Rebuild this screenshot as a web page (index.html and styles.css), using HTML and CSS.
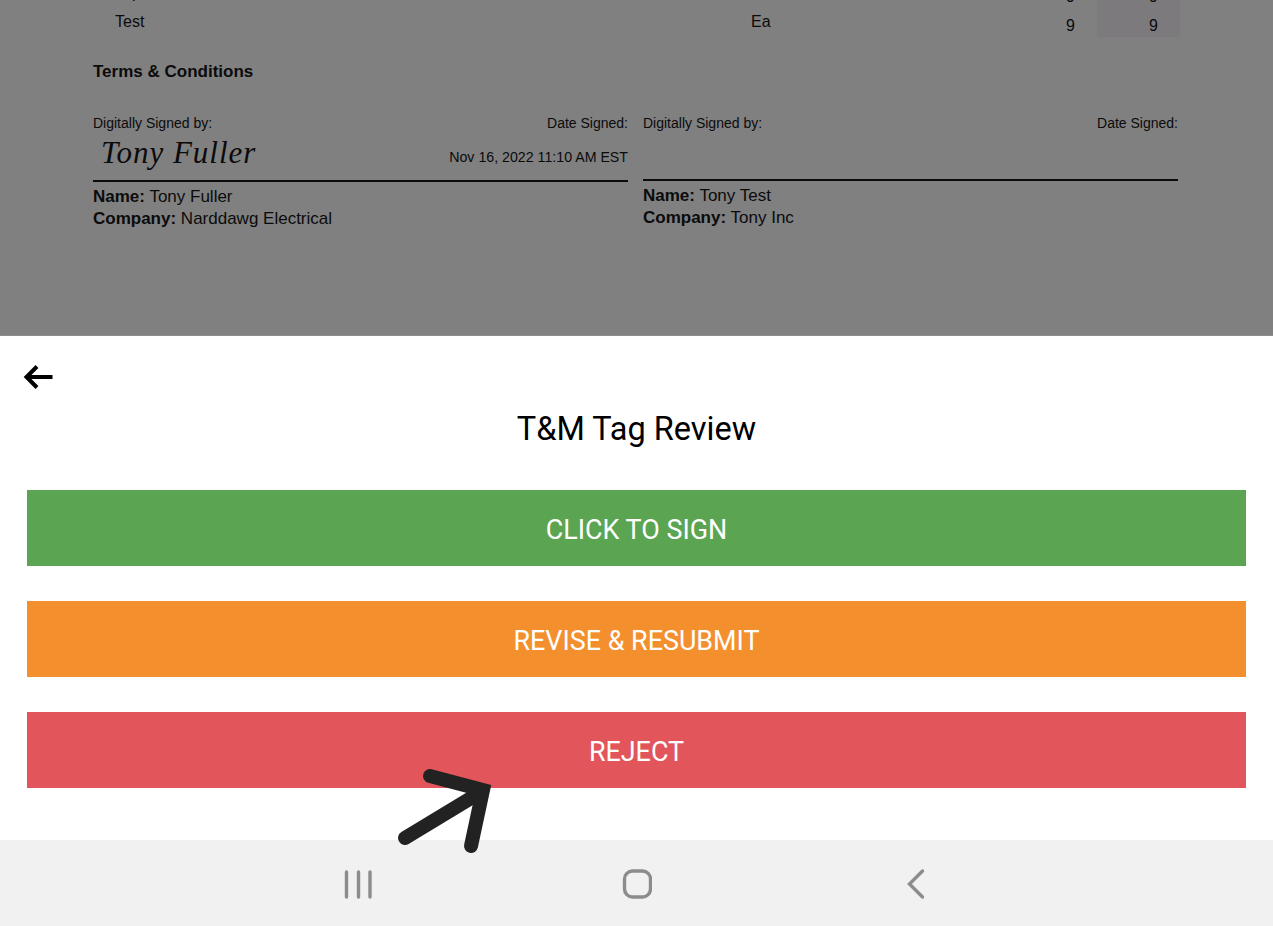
FILE: index.html
```html
<!DOCTYPE html>
<html lang="en">
<head>
<meta charset="utf-8">
<title>T&amp;M Tag Review</title>
<link rel="stylesheet" href="styles.css">
</head>
<body>
<div class="screen">
  <section class="doc">
    <div class="doc-inner">
      <div class="line-row">
        <span class="item">Tape</span><span class="unit">Ea</span><span class="qty">9</span><span class="total">9</span>
      </div>
      <div class="line-row">
        <span class="item">Test</span><span class="unit">Ea</span><span class="qty">9</span><span class="total">9</span>
      </div>
      <h3 class="terms">Terms &amp; Conditions</h3>
      <div class="signatures">
        <div class="sig">
          <div class="sig-labels"><span>Digitally Signed by:</span><span>Date Signed:</span></div>
          <div class="sig-body"><span class="scrawl">Tony Fuller</span><span class="sig-date">Nov 16, 2022 11:10 AM EST</span></div>
          <p class="person"><b>Name:</b> Tony Fuller</p>
          <p class="person"><b>Company:</b> Narddawg Electrical</p>
        </div>
        <div class="sig sig-second">
          <div class="sig-labels"><span>Digitally Signed by:</span><span>Date Signed:</span></div>
          <div class="sig-body"></div>
          <p class="person"><b>Name:</b> Tony Test</p>
          <p class="person"><b>Company:</b> Tony Inc</p>
        </div>
      </div>
    </div>
  </section>

  <section class="sheet">
    <button class="back" aria-label="Back">
      <svg width="32" height="28" viewBox="0 0 32 28"><path d="M29.5 14H3.5M14 3.5 3.5 14 14 24.5" fill="none" stroke="#000" stroke-width="4"/></svg>
    </button>
    <h1 class="title">T&amp;M Tag Review</h1>
    <div class="actions">
      <button class="action green">CLICK TO SIGN</button>
      <button class="action orange">REVISE &amp; RESUBMIT</button>
      <button class="action red">REJECT</button>
    </div>
  </section>

  <nav class="navbar">
    <svg class="nav-icon" width="30" height="30" viewBox="0 0 30 30"><path d="M3.500 3v25M15.500 3v25M27 3v25" fill="none" stroke="#8c8c8c" stroke-width="3.4" stroke-linecap="round"/></svg>
    <svg class="nav-icon" width="30" height="32" viewBox="0 0 30 32"><rect x="2.500" y="3" width="26" height="26" rx="8" fill="none" stroke="#8c8c8c" stroke-width="3.4"/></svg>
    <svg class="nav-icon" width="30" height="32" viewBox="0 0 30 32"><path d="M21.500 3 8.500 16l13 13" fill="none" stroke="#8c8c8c" stroke-width="3.4" stroke-linecap="round" stroke-linejoin="miter"/></svg>
  </nav>

  <svg class="annotation" width="110" height="100" viewBox="0 0 110 100">
    <path d="M12 77 88 31" fill="none" stroke="#222" stroke-width="14" stroke-linecap="round"/>
    <path d="M37 15 90 29 78 85" fill="none" stroke="#222" stroke-width="14" stroke-linecap="round" stroke-linejoin="miter"/>
  </svg>
</div>
</body>
</html>
```
FILE: styles.css
```css
* { box-sizing: border-box; }
html, body { margin: 0; padding: 0; }
body { background: #fff; font-family: "Liberation Sans", Arial, sans-serif; }
.screen { position: relative; width: 1273px; height: 926px; overflow: hidden; display: flex; flex-direction: column; }

.doc { height: 336px; flex: none; background: #808080; color: #0b0b0b; overflow: hidden; border-bottom: 1px solid #8c8c8c; }
.doc-inner { margin-top: -24px; padding: 0 93px; }
.line-row { display: grid; grid-template-columns: 658px 100px 246px 83px; width: 1087px; height: 32px; font-size: 16px; line-height: 20px; }
.line-row:first-child { height: 29px; }
.item { padding: 7px 0 0 22px; }
.unit { padding: 7px 0 0 0; }
.qty { padding: 11px 22px 0 0; text-align: right; }
.total { padding: 11px 22px 0 0; text-align: right; background: #7d7a7d; }

.terms { margin: 25px 0 0; font-size: 17px; line-height: 20px; font-weight: 700; }
.signatures { display: grid; grid-template-columns: 535px 535px; column-gap: 15px; margin-top: 33px; }
.sig-labels { display: flex; justify-content: space-between; font-size: 14px; line-height: 16px; }
.sig-body { height: 51px; display: flex; justify-content: space-between; align-items: flex-end; border-bottom: 2px solid #0b0b0b; padding-bottom: 15px; }
.sig-second .sig-body { height: 49.5px; }
.scrawl { align-self: flex-start; font-family: "Liberation Serif", serif; font-style: italic; font-size: 31px; line-height: 30px; letter-spacing: 1px; margin: 7px 0 0 8px; }
.sig-date { font-size: 14.2px; line-height: 16px; }
.person { margin: 0; font-size: 17px; line-height: 22px; }
.sig-body + .person { margin-top: 4px; }

.sheet { flex: 1; display: flex; flex-direction: column; background: #fff; padding: 0 27px; }
.back { align-self: flex-start; margin: 27px 0 0 -4px; padding: 0; border: 0; background: none; height: 28px; line-height: 0; }
.title { margin: 13px 0 0; font-family: Roboto, sans-serif; font-weight: 400; font-size: 32.5px; line-height: 50px; text-align: center; color: #000; }
.actions { display: flex; flex-direction: column; gap: 35.5px; margin-top: 36px; }
.action { height: 75.5px; border: 0; color: #fff; font-family: Roboto, sans-serif; font-size: 26.9px; padding: 4px 0 0; }
.green { background: #5ba552; }
.orange { background: #f48f2e; }
.red { background: #e2565b; }

.navbar { flex: none; height: 86px; background: #f1f1f1; display: grid; grid-template-columns: repeat(3, 30px); justify-content: center; column-gap: 249px; align-items: center; padding: 2px 0 0 1px; }
.nav-icon { display: block; }
.annotation { position: absolute; left: 393px; top: 761px; }
```
